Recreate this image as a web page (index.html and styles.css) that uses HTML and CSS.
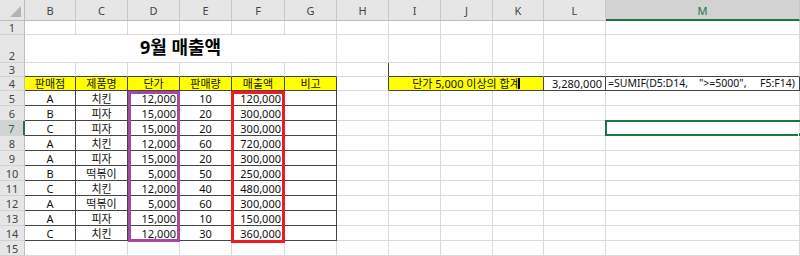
FILE: index.html
```html
<!DOCTYPE html>
<html lang="ko">
<head>
<meta charset="utf-8">
<title>9월 매출액</title>
<link rel="stylesheet" href="styles.css">
</head>
<body>
<div class="wrap">
  <div class="sheet">
    <!-- column headers -->
    <div class="corner"><span class="tri"></span></div>
    <div class="ch">B</div><div class="ch">C</div><div class="ch">D</div><div class="ch">E</div><div class="ch">F</div><div class="ch">G</div><div class="ch">H</div><div class="ch">I</div><div class="ch">J</div><div class="ch">K</div><div class="ch">L</div><div class="ch sel">M</div>

    <!-- row 1 -->
    <div class="rh">1</div>
    <div class="c"></div><div class="c"></div><div class="c"></div><div class="c"></div><div class="c"></div><div class="c"></div><div class="c"></div><div class="c"></div><div class="c"></div><div class="c"></div><div class="c"></div><div class="c"></div>

    <!-- row 2 -->
    <div class="rh">2</div>
    <div class="c title">9월 매출액</div>
    <div class="c"></div><div class="c"></div><div class="c"></div><div class="c"></div><div class="c"></div><div class="c"></div>

    <!-- row 3 -->
    <div class="rh">3</div>
    <div class="c bb"></div><div class="c bb"></div><div class="c bb"></div><div class="c bb"></div><div class="c bb"></div><div class="c bb"></div><div class="c br"></div><div class="c bb"></div><div class="c bb"></div><div class="c bb"></div><div class="c bb"></div><div class="c bb"></div>

    <!-- row 4 -->
    <div class="rh">4</div>
    <div class="c t hd">판매점</div><div class="c t hd">제품명</div><div class="c t hd">단가</div><div class="c t hd">판매량</div><div class="c t hd">매출액</div><div class="c t hd">비고</div>
    <div class="c br"></div>
    <div class="c t hd span3">단가 5,000 이상의 합계<span class="caret"></span></div>
    <div class="c t num">3,280,000</div>
    <div class="c t formula">=SUMIF(D5:D14,    "&gt;=5000",     F5:F14)</div>

    <!-- row 5 -->
    <div class="rh">5</div>
    <div class="c t mid">A</div><div class="c t mid">치킨</div><div class="c t num">12,000</div><div class="c t mid">10</div><div class="c t num">120,000</div><div class="c t"></div>
    <div class="c"></div><div class="c"></div><div class="c"></div><div class="c"></div><div class="c"></div><div class="c"></div>

    <!-- row 6 -->
    <div class="rh">6</div>
    <div class="c t mid">B</div><div class="c t mid">피자</div><div class="c t num">15,000</div><div class="c t mid">20</div><div class="c t num">300,000</div><div class="c t"></div>
    <div class="c"></div><div class="c"></div><div class="c"></div><div class="c"></div><div class="c"></div><div class="c"></div>

    <!-- row 7 -->
    <div class="rh sel">7</div>
    <div class="c t mid">C</div><div class="c t mid">피자</div><div class="c t num">15,000</div><div class="c t mid">20</div><div class="c t num">300,000</div><div class="c t"></div>
    <div class="c"></div><div class="c"></div><div class="c"></div><div class="c"></div><div class="c"></div><div class="c"></div>

    <!-- row 8 -->
    <div class="rh">8</div>
    <div class="c t mid">A</div><div class="c t mid">치킨</div><div class="c t num">12,000</div><div class="c t mid">60</div><div class="c t num">720,000</div><div class="c t"></div>
    <div class="c"></div><div class="c"></div><div class="c"></div><div class="c"></div><div class="c"></div><div class="c"></div>

    <!-- row 9 -->
    <div class="rh">9</div>
    <div class="c t mid">A</div><div class="c t mid">피자</div><div class="c t num">15,000</div><div class="c t mid">20</div><div class="c t num">300,000</div><div class="c t"></div>
    <div class="c"></div><div class="c"></div><div class="c"></div><div class="c"></div><div class="c"></div><div class="c"></div>

    <!-- row 10 -->
    <div class="rh">10</div>
    <div class="c t mid">B</div><div class="c t mid">떡볶이</div><div class="c t num">5,000</div><div class="c t mid">50</div><div class="c t num">250,000</div><div class="c t"></div>
    <div class="c"></div><div class="c"></div><div class="c"></div><div class="c"></div><div class="c"></div><div class="c"></div>

    <!-- row 11 -->
    <div class="rh">11</div>
    <div class="c t mid">C</div><div class="c t mid">치킨</div><div class="c t num">12,000</div><div class="c t mid">40</div><div class="c t num">480,000</div><div class="c t"></div>
    <div class="c"></div><div class="c"></div><div class="c"></div><div class="c"></div><div class="c"></div><div class="c"></div>

    <!-- row 12 -->
    <div class="rh">12</div>
    <div class="c t mid">A</div><div class="c t mid">떡볶이</div><div class="c t num">5,000</div><div class="c t mid">60</div><div class="c t num">300,000</div><div class="c t"></div>
    <div class="c"></div><div class="c"></div><div class="c"></div><div class="c"></div><div class="c"></div><div class="c"></div>

    <!-- row 13 -->
    <div class="rh">13</div>
    <div class="c t mid">A</div><div class="c t mid">피자</div><div class="c t num">15,000</div><div class="c t mid">10</div><div class="c t num">150,000</div><div class="c t"></div>
    <div class="c"></div><div class="c"></div><div class="c"></div><div class="c"></div><div class="c"></div><div class="c"></div>

    <!-- row 14 -->
    <div class="rh">14</div>
    <div class="c t mid">C</div><div class="c t mid">치킨</div><div class="c t num">12,000</div><div class="c t mid">30</div><div class="c t num">360,000</div><div class="c t"></div>
    <div class="c"></div><div class="c"></div><div class="c"></div><div class="c"></div><div class="c"></div><div class="c"></div>

    <!-- row 15 -->
    <div class="rh">15</div>
    <div class="c"></div><div class="c"></div><div class="c"></div><div class="c"></div><div class="c"></div><div class="c"></div><div class="c"></div><div class="c"></div><div class="c"></div><div class="c"></div><div class="c"></div><div class="c"></div>
  </div>

  <div class="marks">
    <div class="box purple"></div>
    <div class="box red"></div>
    <div class="active"><span class="handle"></span></div>
  </div>
</div>
</body>
</html>
```

FILE: styles.css
```css
* { box-sizing: border-box; }
html, body { margin: 0; padding: 0; background: #ffffff; }
body {
  width: 800px;
  height: 256px;
  overflow: hidden;
  font-family: "Noto Sans", "Noto Sans CJK KR", sans-serif;
  font-size: 11px;
  color: #111;
}

.wrap {
  display: grid;
  width: 800px;
  height: 256px;
}

.sheet, .marks {
  grid-area: 1 / 1;
  display: grid;
  grid-template-columns: 25px 51px 52px 52px 52px 53px 52px 52px 52px 52px 51px 62px 194px;
  grid-template-rows: 21px 14px 28px 14px 14px repeat(11, 15px);
}

.marks { pointer-events: none; }

/* headers */
.corner {
  background: #e6e6e6;
  border-right: 1px solid #bdbdbd;
  border-bottom: 1px solid #bdbdbd;
  position: relative;
}
.tri {
  position: absolute;
  right: 3px;
  bottom: 3px;
  width: 0;
  height: 0;
  border-left: 11px solid transparent;
  border-bottom: 11px solid #b4b4b4;
}

.ch {
  background: #e6e6e6;
  border-right: 1px solid #c8c8c8;
  border-bottom: 1px solid #bdbdbd;
  color: #444;
  font-size: 11px;
  display: flex;
  align-items: center;
  justify-content: center;
  padding-top: 1px;
}
.ch.sel {
  background: #d2d2d2;
  color: #217346;
  border-bottom: 2px solid #217346;
}

.rh {
  background: #e6e6e6;
  border-right: 1px solid #bdbdbd;
  border-bottom: 1px solid #d2d2d2;
  color: #444;
  font-size: 11px;
  display: flex;
  align-items: flex-end;
  justify-content: center;
  line-height: 13px;
}
.rh.sel {
  background: #d2d2d2;
  color: #217346;
  border-right: 2px solid #217346;
}

/* cells */
.c {
  border-right: 1px solid #dadada;
  border-bottom: 1px solid #dadada;
  display: flex;
  align-items: flex-end;
  line-height: 13px;
  white-space: nowrap;
  overflow: hidden;
}
.bb { border-bottom-color: #444; }
.br { border-right-color: #444; }
.t {
  border-right-color: #444;
  border-bottom-color: #444;
}
.hd {
  background: #ffff00;
  justify-content: center;
}
.mid { justify-content: center; }
.num { justify-content: flex-end; padding-right: 3px; }
.span3 { grid-column: span 3; }

.title {
  grid-column: span 6;
  justify-content: center;
  font-weight: bold;
  font-size: 18px;
  line-height: 22px;
  padding-bottom: 4px;
  color: #000;
}

.formula {
  padding-left: 2px;
  white-space: pre;
  font-size: 10.5px;
}

.caret {
  display: inline-block;
  width: 2px;
  height: 11px;
  background: #000;
  margin-left: -2px;
  margin-bottom: 1px;
}

/* annotation boxes */
.box { border: 3px solid; }
.purple {
  grid-column: 4;
  grid-row: 6 / 16;
  border-color: #a349a4;
  margin: 0 0 -1px 0;
}
.red {
  grid-column: 6;
  grid-row: 6 / 16;
  border-color: #ed1c24;
  margin: 0 0 -2px -1px;
}
.active {
  grid-column: 13;
  grid-row: 8;
  border: 2px solid #217346;
  margin: -1px -2px 0 -1px;
  position: relative;
}
.handle {
  position: absolute;
  right: -3px;
  bottom: -3px;
  width: 5px;
  height: 5px;
  background: #217346;
  border: 1px solid #fff;
}
```
